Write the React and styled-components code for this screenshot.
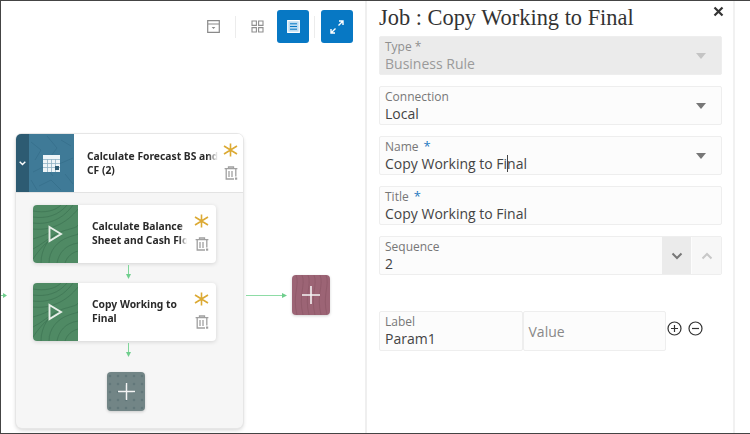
import React from "react";
import styled, { createGlobalStyle } from "styled-components";

const Global = createGlobalStyle`
  html, body { margin: 0; padding: 0; background: #fff; }
  #root { width: 750px; height: 434px; }
`;

const Frame = styled.div`
  box-sizing: border-box;
  width: 750px;
  height: 434px;
  border: solid #444;
  border-width: 1px 0 1px 1px;
  display: flex;
  overflow: hidden;
  background: #fff;
  font-family: "Open Sans", "Noto Sans", sans-serif;
`;

const Canvas = styled.div`
  position: relative;
  width: 364px;
  flex: none;
  border-right: 2px solid #efefef;
`;

const Toolbar = styled.div`
  display: flex;
  align-items: center;
  justify-content: flex-end;
  height: 33px;
  padding: 9px 12px 0 0;
`;

const ToolIcon = styled.div`
  width: 32px;
  height: 33px;
  display: flex;
  align-items: center;
  justify-content: center;
`;

const ToolSep = styled.div`
  width: 1px;
  height: 22px;
  background: ${(p) => (p.$hidden ? "transparent" : "#ececec")};
  margin: ${(p) => p.$m};
`;

const BlueButton = styled.div`
  width: 32px;
  height: 33px;
  border-radius: 3px;
  background: #0778c4;
  display: flex;
  align-items: center;
  justify-content: center;
`;

const ParentNode = styled.div`
  position: absolute;
  left: 15px;
  top: 133px;
  width: 227px;
  height: 294px;
  border-radius: 6px;
  background: #f6f6f6;
  box-sizing: border-box;
  box-shadow: 0 0 0 1px #e6e6e6, 0 2px 4px rgba(0, 0, 0, 0.18);
  display: flex;
  flex-direction: column;
  align-items: center;
`;

const ParentHeader = styled.div`
  width: 100%;
  height: 59px;
  flex: none;
  display: flex;
  background: #fff;
  border-bottom: 1px solid #e3e3e3;
  box-sizing: border-box;
  border-radius: 5px 5px 0 0;
  overflow: hidden;
`;

const Collapse = styled.div`
  width: 13px;
  flex: none;
  background: #2d5b72;
  display: flex;
  align-items: center;
  justify-content: center;
`;

const Tile = styled.div`
  position: relative;
  flex: none;
  width: ${(p) => p.$w}px;
  align-self: stretch;
  background: ${(p) => p.$bg};
  display: flex;
  align-items: center;
  justify-content: center;
  overflow: hidden;
`;

const Texture = styled.svg`
  position: absolute;
  inset: 0;
  width: 100%;
  height: 100%;
`;

const TileGlyph = styled.svg`
  position: relative;
`;

const NodeText = styled.div`
  flex: none;
  width: ${(p) => p.$w}px;
  margin-left: ${(p) => p.$ml}px;
  margin-bottom: ${(p) => p.$mb || 0}px;
  align-self: center;
  overflow: hidden;
  font-family: "Noto Sans", sans-serif;
  font-weight: 700;
  font-size: 10.3px;
  line-height: 14.5px;
  color: #2a2a2a;
  -webkit-mask-image: linear-gradient(to right, #000 92%, transparent 100%);
  mask-image: linear-gradient(to right, #000 92%, transparent 100%);
`;

const NodeLine = styled.div`
  white-space: nowrap;
`;

const NodeActions = styled.div`
  flex: none;
  display: flex;
  flex-direction: column;
  align-items: center;
  gap: 9px;
  margin-left: ${(p) => p.$ml}px;
  padding-top: 9px;
`;

const ChildCard = styled.div`
  width: 183px;
  height: 58px;
  flex: none;
  border-radius: 4px;
  background: #fff;
  display: flex;
  overflow: hidden;
  box-shadow: 0 1px 4px rgba(0, 0, 0, 0.14);
  margin-left: -10px;
`;

const FirstGap = styled.div`
  height: 12px;
  flex: none;
`;

const VArrow = styled.svg`
  flex: none;
  display: block;
  margin: ${(p) => p.$m};
`;

const AddTile = styled.div`
  position: ${(p) => (p.$free ? "absolute" : "relative")};
  left: ${(p) => (p.$free ? "291px" : "auto")};
  top: ${(p) => (p.$free ? "274px" : "auto")};
  width: 38px;
  height: ${(p) => (p.$free ? 40 : 39)}px;
  flex: none;
  border-radius: 4px;
  background: ${(p) => p.$bg};
  overflow: hidden;
  display: flex;
  align-items: center;
  justify-content: center;
  box-shadow: 0 1px 3px rgba(0, 0, 0, 0.18);
  margin-left: ${(p) => (p.$free ? 0 : -7)}px;
`;

const Connector = styled.svg`
  position: absolute;
  left: ${(p) => p.$x}px;
  top: ${(p) => p.$y}px;
`;

const Panel = styled.div`
  width: 368px;
  flex: none;
  position: relative;
  border-right: 2px solid #f1f1f1;
  padding: 0 12px;
  box-sizing: border-box;
`;

const Heading = styled.h1`
  margin: 0;
  padding-top: 4px;
  height: 35px;
  box-sizing: border-box;
  font-family: "Liberation Serif", serif;
  font-weight: 400;
  font-size: 22.4px;
  line-height: 26px;
  color: #333;
  white-space: nowrap;
`;

const CloseIcon = styled.svg`
  position: absolute;
  top: 5px;
  right: 9px;
`;

const Form = styled.div`
  display: flex;
  flex-direction: column;
  gap: 11px;
  width: 343px;
`;

const Field = styled.div`
  box-sizing: border-box;
  height: ${(p) => p.$h || 39}px;
  display: flex;
  align-items: stretch;
  border: 1px solid #eee;
  border-radius: 2px;
  background: ${(p) => (p.$disabled ? "#ebebeb" : "#fcfcfc")};
  flex: ${(p) => (p.$half ? "1 1 0" : "none")};
`;

const FieldBody = styled.div`
  flex: 1;
  min-width: 0;
  padding: ${(p) => (p.$center ? 0 : 2)}px 0 0 5px;
  display: flex;
  flex-direction: column;
  justify-content: ${(p) => (p.$center ? "center" : "flex-start")};
`;

const Label = styled.div`
  font-size: 12px;
  line-height: 15px;
  height: 15px;
  color: ${(p) => (p.$disabled ? "#8f8f8f" : "#777")};
`;

const Required = styled.span`
  color: #1f7ac0;
  font-size: 13px;
  line-height: 11px;
  margin-left: 5px;
  display: inline-block;
  height: 11px;
  overflow: visible;
`;

const Value = styled.div`
  position: relative;
  font-size: 14px;
  line-height: 19px;
  white-space: nowrap;
  color: ${(p) => p.$color || "#444"};
`;

const Caret = styled.span`
  display: inline-block;
  width: 1px;
  height: 17px;
  margin: 0 -1px 0 0;
  background: #444;
  vertical-align: -3px;
`;

const Arrow = styled.div`
  align-self: center;
  width: 0;
  height: 0;
  border-left: 5px solid transparent;
  border-right: 5px solid transparent;
  border-top: 6px solid ${(p) => p.$c};
  margin-right: 15px;
`;

const Stepper = styled.div`
  width: 29px;
  flex: none;
  display: flex;
  align-items: center;
  justify-content: center;
  background: ${(p) => p.$bg};
  margin-left: ${(p) => p.$ml}px;
`;

const Spacer = styled.div`
  height: 14px;
`;

const ParamRow = styled.div`
  display: flex;
  align-items: center;
  width: 287px;
  height: 40px;
  position: relative;
`;

const ParamIcons = styled.div`
  display: flex;
  gap: 6px;
  position: absolute;
  left: 288px;
  top: 10px;
`;

const BlockSvg = styled.svg`
  display: block;
`;

const teal = (
  <Texture viewBox="0 0 45 58" preserveAspectRatio="none">
    <g stroke="#2f6480" strokeWidth="0.8" fill="none" opacity="0.55">
      <path d="M2 8 L12 16 L6 26 M18 2 L28 14 L22 22 M32 6 L42 12 M4 38 L16 32 L24 42 M30 30 L44 24 M10 52 L22 46 L32 56 M36 40 L44 50 M2 46 L8 56" />
    </g>
  </Texture>
);

const green = (
  <Texture viewBox="0 0 45 58" preserveAspectRatio="none">
    <g stroke="#3a7050" strokeWidth="1" fill="none" opacity="0.6">
      <path d="M0 6 C12 8 22 6 28 0 M0 12 C14 14 26 10 34 0 M0 18 C16 20 30 14 40 0 M0 24 C18 26 34 18 45 4 M8 58 C8 44 16 30 30 26 S44 22 45 20 M16 58 C16 46 24 36 36 32 S45 30 45 28 M24 58 C26 48 32 40 45 38 M32 58 C34 52 38 48 45 46 M0 34 C6 32 14 30 18 26 M0 44 C8 40 14 34 22 30 M0 54 C4 48 10 40 18 34" />
    </g>
  </Texture>
);

const redTex = (
  <Texture viewBox="0 0 38 40" preserveAspectRatio="none">
    <g stroke="#84505f" strokeWidth="0.8" fill="none" opacity="0.55">
      <path d="M4 0 C8 10 0 20 5 40 M10 0 C14 10 6 20 11 40 M16 0 C20 10 12 20 17 40 M22 0 C26 10 18 20 23 40 M28 0 C32 10 24 20 29 40 M34 0 C38 10 30 20 35 40" />
    </g>
  </Texture>
);

const grayTex = (
  <Texture viewBox="0 0 38 39">
    <g fill="#62777a">
      {[4, 12, 20, 28, 36].map((y) =>
        [3, 11, 19, 27, 35].map((x) => <circle key={`${x}-${y}`} cx={x} cy={y} r="1.3" />)
      )}
    </g>
  </Texture>
);

const Play = () => (
  <TileGlyph width="15" height="18" viewBox="0 0 15 18">
    <path d="M1.5 2 L13 9 L1.5 16 Z" fill="none" stroke="#e8efe9" strokeWidth="1.9" />
  </TileGlyph>
);

const Star = () => (
  <BlockSvg width="15" height="14" viewBox="0 0 15 14">
    <path d="M7.5 0.5 V13.5 M1 3 L14 11 M14 3 L1 11" stroke="#dcaa35" strokeWidth="1.6" fill="none" />
  </BlockSvg>
);

const Trash = () => (
  <BlockSvg width="14" height="14" viewBox="0 0 14 14">
    <path d="M4.5 2.5 V1 H9.5 V2.5 M0.6 2.6 H13.4 M2.2 2.8 V13 H10 M11.8 2.8 V10.5 M5 5 V11 M8 5 V11" fill="none" stroke="#a0a0a0" strokeWidth="1.3" />
    <rect x="11" y="11.5" width="2.2" height="2.2" fill="#a0a0a0" />
  </BlockSvg>
);

const PlusGlyph = ({ s }) => (
  <TileGlyph width={s} height={s} viewBox="0 0 16 16">
    <path d="M8 0 V16 M0 8 H16" stroke="#f4f4f4" strokeWidth="1.4" />
  </TileGlyph>
);

export default function App() {
  return (
    <Frame>
      <Global />
      <Canvas>
        <Toolbar>
          <ToolIcon>
            <svg width="13" height="13" viewBox="0 0 13 13">
              <path d="M0.7 0.7 H12.3 V12.3 H0.7 Z M0.7 4 H12.3" fill="none" stroke="#8a8a8a" strokeWidth="1.2" />
              <path d="M4.6 7 L6.5 9 L8.4 7 Z" fill="#8a8a8a" />
            </svg>
          </ToolIcon>
          <ToolSep $m="0 5px 0 6px" />
          <ToolIcon>
            <svg width="13" height="13" viewBox="0 0 13 13">
              <path d="M1 1 H5.4 V5.4 H1 Z M7.6 1 H12 V5.4 H7.6 Z M1 7.6 H5.4 V12 H1 Z M7.6 7.6 H12 V12 H7.6 Z" fill="none" stroke="#8f8f8f" strokeWidth="1.1" />
            </svg>
          </ToolIcon>
          <ToolSep $hidden $m="0 3px 0 0" />
          <BlueButton>
            <svg width="13" height="13" viewBox="0 0 13 13">
              <path d="M0.7 0.7 H12.3 V12.3 H0.7 Z" fill="#bcdcf2" stroke="#fff" strokeWidth="1.2" />
              <path d="M3 3.8 H10 M3 6.5 H10 M3 9.2 H10" stroke="#0778c4" strokeWidth="1" />
            </svg>
          </BlueButton>
          <ToolSep $m="0 6px 0 5px" />
          <BlueButton>
            <svg width="14" height="14" viewBox="0 0 14 14">
              <path d="M8.5 5.5 L13 1 M9 1 H13 V5 M5.5 8.5 L1 13 M1 9 V13 H5" fill="none" stroke="#fff" strokeWidth="1.4" />
            </svg>
          </BlueButton>
        </Toolbar>

        <Connector $x={-1} $y={291} width="8" height="7" viewBox="0 0 8 7">
          <path d="M0 3.5 H4" stroke="#7fd69a" />
          <path d="M3 1 L7 3.5 L3 6 Z" fill="#6fce8d" />
        </Connector>
        <Connector $x={245} $y={291} width="42" height="7" viewBox="0 0 42 7">
          <path d="M0 3.5 H38" stroke="#8edca6" />
          <path d="M36 1 L41 3.5 L36 6 Z" fill="#6fce8d" />
        </Connector>

        <ParentNode>
          <ParentHeader>
            <Collapse>
              <svg width="7" height="5" viewBox="0 0 7 5">
                <path d="M0.7 0.8 L3.5 3.6 L6.3 0.8" fill="none" stroke="#fff" strokeWidth="1.4" />
              </svg>
            </Collapse>
            <Tile $w={45} $bg="#3f7a97">
              {teal}
              <TileGlyph width="17" height="17" viewBox="0 0 17 17">
                <rect width="17" height="17" fill="#eef5f8" />
                <path d="M0 4.5 H17 M0 8.5 H17 M0 12.5 H17 M4.5 4 V17 M8.5 4 V17 M12.5 4 V17" stroke="#8fb2c4" strokeWidth="0.8" />
                <rect x="12" y="11" width="4" height="4" fill="#2d5b72" />
              </TileGlyph>
            </Tile>
            <NodeText $w={131} $ml={13}>
              <NodeLine>Calculate Forecast BS and</NodeLine>
              <NodeLine>CF (2)</NodeLine>
            </NodeText>
            <NodeActions $ml={5}>
              <Star />
              <Trash />
            </NodeActions>
          </ParentHeader>
          <FirstGap />
          <ChildCard>
            <Tile $w={45} $bg="#4f8a64">
              {green}
              <Play />
            </Tile>
            <NodeText $w={95} $ml={14} $mb={2}>
              <NodeLine>Calculate Balance</NodeLine>
              <NodeLine>Sheet and Cash Flow</NodeLine>
            </NodeText>
            <NodeActions $ml={7}>
              <Star />
              <Trash />
            </NodeActions>
          </ChildCard>
          <VArrow width="7" height="15" viewBox="0 0 7 15" $m="2px 0 3px -3px">
            <path d="M3.5 0 V11" stroke="#7fd69a" />
            <path d="M1 9 L3.5 14 L6 9 Z" fill="#6fce8d" />
          </VArrow>
          <ChildCard>
            <Tile $w={45} $bg="#4f8a64">
              {green}
              <Play />
            </Tile>
            <NodeText $w={95} $ml={14} $mb={2}>
              <NodeLine>Copy Working to</NodeLine>
              <NodeLine>Final</NodeLine>
            </NodeText>
            <NodeActions $ml={7}>
              <Star />
              <Trash />
            </NodeActions>
          </ChildCard>
          <VArrow width="7" height="15" viewBox="0 0 7 15" $m="2px 0 14px -3px">
            <path d="M3.5 0 V11" stroke="#7fd69a" />
            <path d="M1 9 L3.5 14 L6 9 Z" fill="#6fce8d" />
          </VArrow>
          <AddTile $bg="#728586">
            {grayTex}
            <PlusGlyph s={17} />
          </AddTile>
        </ParentNode>

        <AddTile $free $bg="#9c6475">
          {redTex}
          <PlusGlyph s={18} />
        </AddTile>
      </Canvas>

      <Panel>
        <Heading>Job : Copy Working to Final</Heading>
        <CloseIcon width="11" height="11" viewBox="0 0 11 11">
          <path d="M1.5 1.5 L9.5 9.5 M9.5 1.5 L1.5 9.5" stroke="#333" strokeWidth="2.2" />
        </CloseIcon>
        <Form>
          <Field $disabled>
            <FieldBody>
              <Label $disabled>Type *</Label>
              <Value $color="#9a9a9a">Business Rule</Value>
            </FieldBody>
            <Arrow $c="#c4c4c4" />
          </Field>
          <Field>
            <FieldBody>
              <Label>Connection</Label>
              <Value>Local</Value>
            </FieldBody>
            <Arrow $c="#777" />
          </Field>
          <Field>
            <FieldBody>
              <Label>Name<Required>*</Required></Label>
              <Value>Copy Working to Fi<Caret />nal</Value>
            </FieldBody>
            <Arrow $c="#777" />
          </Field>
          <Field>
            <FieldBody>
              <Label>Title<Required>*</Required></Label>
              <Value>Copy Working to Final</Value>
            </FieldBody>
          </Field>
          <Field>
            <FieldBody>
              <Label>Sequence</Label>
              <Value>2</Value>
            </FieldBody>
            <Stepper $bg="#ebebeb" $ml={0}>
              <svg width="12" height="8" viewBox="0 0 12 8">
                <path d="M1.5 1.5 L6 6 L10.5 1.5" fill="none" stroke="#777" strokeWidth="2" />
              </svg>
            </Stepper>
            <Stepper $bg="#f7f7f7" $ml={1}>
              <svg width="12" height="8" viewBox="0 0 12 8">
                <path d="M1.5 6.5 L6 2 L10.5 6.5" fill="none" stroke="#c8c8c8" strokeWidth="2" />
              </svg>
            </Stepper>
          </Field>
          <Spacer />
          <ParamRow>
            <Field $half $h={40}>
              <FieldBody>
                <Label>Label</Label>
                <Value>Param1</Value>
              </FieldBody>
            </Field>
            <Field $half $h={40}>
              <FieldBody $center>
                <Value $color="#888">Value</Value>
              </FieldBody>
            </Field>
            <ParamIcons>
              <svg width="15" height="15" viewBox="0 0 15 15">
                <circle cx="7.5" cy="7.5" r="6.5" fill="none" stroke="#333" strokeWidth="1.2" />
                <path d="M4 7.5 H11 M7.5 4 V11" stroke="#333" strokeWidth="1.2" />
              </svg>
              <svg width="15" height="15" viewBox="0 0 15 15">
                <circle cx="7.5" cy="7.5" r="6.5" fill="none" stroke="#333" strokeWidth="1.2" />
                <path d="M4 7.5 H11" stroke="#333" strokeWidth="1.2" />
              </svg>
            </ParamIcons>
          </ParamRow>
        </Form>
      </Panel>
    </Frame>
  );
}
